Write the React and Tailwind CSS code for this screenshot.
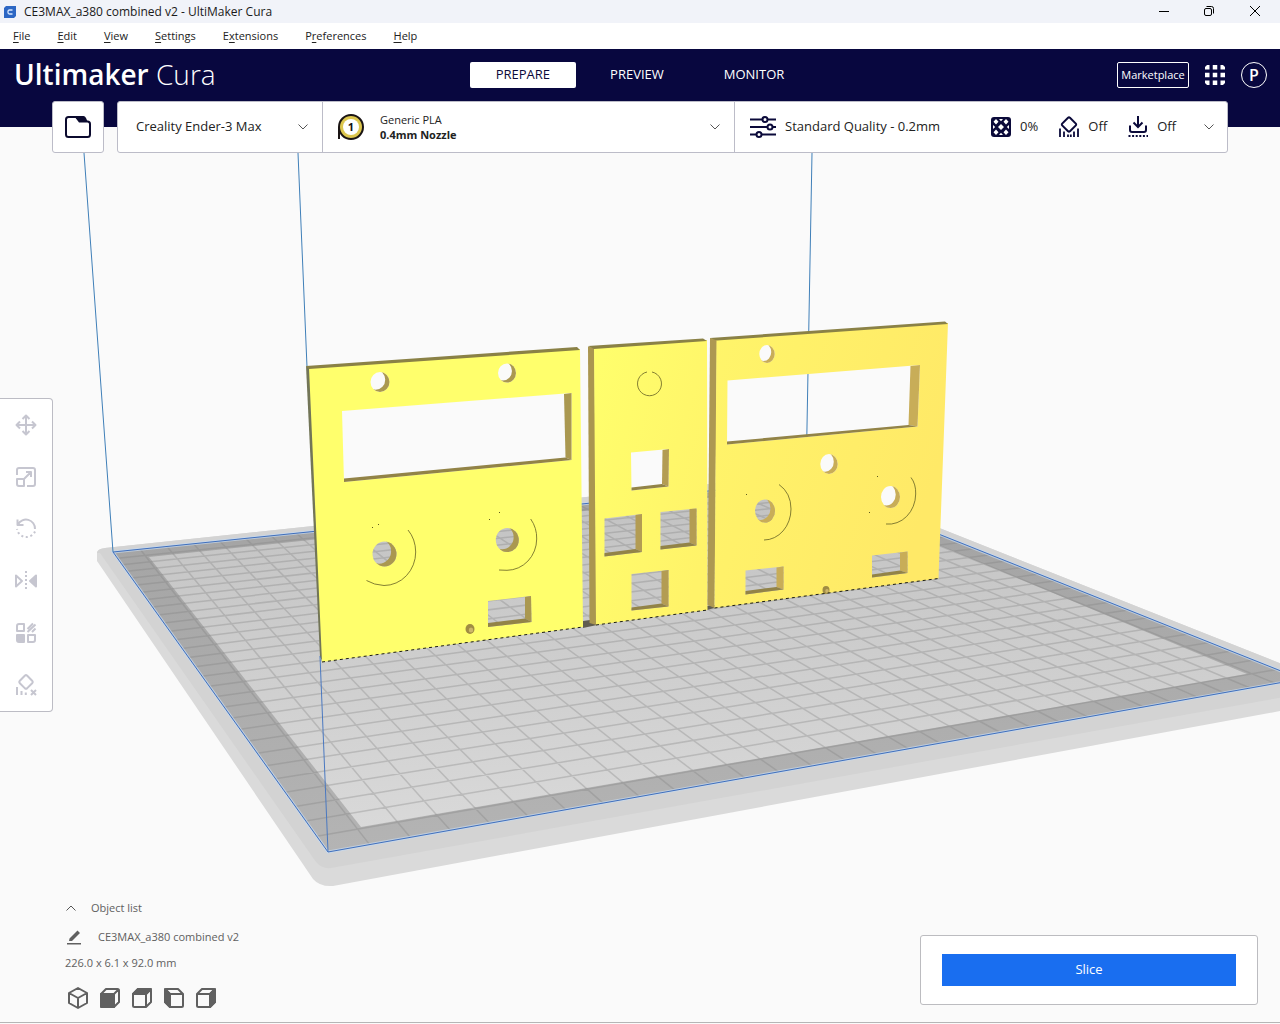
import React from "react";

/* ---------- build plate geometry ---------- */

const BED = [
  [113, 552],
  [806, 481],
  [1301, 679],
  [328, 852],
];

// Projective map from the unit square to the plate's four corners.
function projector([p0, p1, p2, p3]) {
  const dx1 = p1[0] - p2[0];
  const dx2 = p3[0] - p2[0];
  const sx = p0[0] - p1[0] + p2[0] - p3[0];
  const dy1 = p1[1] - p2[1];
  const dy2 = p3[1] - p2[1];
  const sy = p0[1] - p1[1] + p2[1] - p3[1];
  const det = dx1 * dy2 - dx2 * dy1;
  const g = (sx * dy2 - dx2 * sy) / det;
  const h = (dx1 * sy - sx * dy1) / det;
  const a = p1[0] - p0[0] + g * p1[0];
  const b = p3[0] - p0[0] + h * p3[0];
  const d = p1[1] - p0[1] + g * p1[1];
  const e = p3[1] - p0[1] + h * p3[1];
  return (u, v) => {
    const w = g * u + h * v + 1;
    return [(a * u + b * v + p0[0]) / w, (d * u + e * v + p0[1]) / w];
  };
}

const project = projector(BED);
const CELLS = 30;
const seg = (p, q) => `M${p[0].toFixed(1)} ${p[1].toFixed(1)}L${q[0].toFixed(1)} ${q[1].toFixed(1)}`;
const gridPath = Array.from({ length: CELLS - 1 }, (_, i) => {
  const t = (i + 1) / CELLS;
  return seg(project(t, 0), project(t, 1)) + seg(project(0, t), project(1, t));
}).join("");

/* ---------- model geometry ---------- */

const poly = (pts) => "M" + pts.map((p) => p.join(" ")).join("L") + "Z";
const oval = ([cx, cy, rx, ry]) =>
  `M${cx - rx} ${cy}A${rx} ${ry} 0 1 0 ${cx + rx} ${cy}A${rx} ${ry} 0 1 0 ${cx - rx} ${cy}Z`;

// Each pocket: outer corners (tl, tr, br, bl), then the inner corners of its walls (top, bottom) and the left floor edge.
const PANELS = [
  {
    fill: "#ffff6c",
    wall: "#aa9850",
    face: [[309, 368], [580, 349], [583, 627], [322, 662]],
    top: [[306, 366], [577, 347], [580, 350], [309, 369]],
    side: [[306, 366], [310, 368], [323, 662], [320, 657]],
    sideFill: "#727557",
    pockets: [
      { o: [[342, 411], [571.5, 393], [571.5, 460], [344, 482]], i: [[564, 394], [565.5, 457.5], [344, 478.5]] },
      { o: [[488, 601], [531, 596], [531.5, 622], [488, 627]], i: [[525, 597], [525, 618.5], [488, 623]] },
    ],
    bores: [[380, 382, 9.5, 10], [507, 373, 9, 9.5], [384.5, 554, 12, 12.5], [507.3, 540, 11.5, 12]],
    pins: [[470, 629, 4.5, 5]],
    arcs: "M408 530Q415.5 539 415.7 552A31.7 33.5 0 0 1 384 585.5Q374 585 366.5 580.5M530.7 519Q537 528 536.7 539A30 31.5 0 0 1 507 570.3L499 570",
    dots: [[372, 527], [378, 524], [489, 519], [499, 512]],
  },
  {
    fill: "url(#mid)",
    wall: "#b39c53",
    face: [[594, 348], [707, 340], [707.5, 610], [596, 625]],
    top: [[588, 346], [703, 338.5], [707, 341], [594, 349]],
    side: [[588, 346.5], [594.5, 348], [596.5, 625], [589.5, 623]],
    sideFill: "#aa9650",
    pockets: [
      { o: [[631, 452.5], [669, 449], [668.5, 486.5], [631.5, 490.5]], i: [[662.5, 450], [662, 484], [631.5, 487.5]] },
      { o: [[604.5, 518.5], [642, 514], [642, 552], [604.5, 556.5]], i: [[635.5, 515], [635.5, 549], [604.5, 553]] },
      { o: [[660.5, 512], [696.5, 508.5], [696.5, 545.5], [660.5, 549.5]], i: [[689.5, 509], [689.5, 542.5], [660.5, 546]] },
      { o: [[631.5, 574], [668.5, 570], [668.5, 606.5], [631.5, 610.5]], i: [[661.5, 571], [661.5, 603.5], [631.5, 607.5]] },
    ],
    bores: [],
    pins: [],
    arcs: "M652 372A12 12 0 1 1 647 372",
    dots: [],
  },
  {
    fill: "url(#right)",
    wall: "#c8ad58",
    face: [[716.5, 339], [948, 323], [938.5, 578.5], [714.5, 608]],
    top: [[710, 338], [945, 321.5], [948, 324], [717, 340.5]],
    side: [[710, 338], [717, 339], [714.5, 608], [707.5, 605]],
    sideFill: "#ad9852",
    pockets: [
      { o: [[727.5, 380.5], [920, 365], [917.5, 426.5], [727, 444.5]], i: [[910.5, 366], [908.5, 425], [727, 441.5]] },
      { o: [[745.5, 570.5], [783.5, 566.5], [783.5, 589.5], [745.5, 594.5]], i: [[776.5, 567.5], [776.5, 587], [745.5, 591]] },
      { o: [[872, 555.5], [907.5, 551.5], [907.5, 573], [872, 577.5]], i: [[900, 552.5], [900, 570.5], [872, 574.5]] },
    ],
    bores: [[767, 354, 7.7, 9], [829, 464, 8.7, 10], [765, 511, 10, 11.5], [890.5, 497, 9.5, 11]],
    pins: [[826, 590, 3.5, 4]],
    arcs: "M779 484.5Q791 493 791 509A27 31 0 0 1 764 540M911 477.5Q916 484 915.7 494A27 30.5 0 0 1 886 524",
    dots: [[877, 476], [869, 512], [746, 494]],
  },
];

function Panel({ panel, index }) {
  const holes = panel.pockets.map((p) => poly(p.o)).join("") + panel.bores.map(oval).join("");
  const [, , br, bl] = panel.face;
  return (
    <g>
      <path d={poly(panel.side)} fill={panel.sideFill} />
      <path d={poly(panel.face) + holes} fill={panel.fill} fillRule="evenodd" />
      <path d={poly(panel.top)} fill="#8a8146" />
      {panel.pockets.map(({ o, i }, k) => (
        <g key={k}>
          <path d={poly([i[0], o[1], o[2], i[1]])} fill={panel.wall} />
          <path d={poly([i[2], i[1], o[2], o[3]])} fill="#928347" />
        </g>
      ))}
      {panel.bores.map(([cx, cy, rx, ry], k) => (
        <g key={k}>
          <clipPath id={`bore-${index}-${k}`}>
            <ellipse cx={cx} cy={cy} rx={rx} ry={ry} />
          </clipPath>
          <path
            clipPath={`url(#bore-${index}-${k})`}
            d={`M${cx - 20} ${cy - 20}h40v40h-40Z` + oval([cx - rx * 0.45, cy - ry * 0.22, rx, ry])}
            fillRule="evenodd"
            fill={panel.wall}
          />
        </g>
      ))}
      {panel.pins.map(([cx, cy, rx, ry], k) => (
        <g key={k}>
          <ellipse cx={cx} cy={cy} rx={rx} ry={ry} fill="#a08c43" />
          <ellipse cx={cx + 1} cy={cy + 1} rx={rx / 2} ry={ry / 2} fill="#cdb66a" />
        </g>
      ))}
      <path d={panel.arcs} fill="none" stroke="#6f6a28" strokeWidth="1" strokeOpacity="0.85" />
      {panel.dots.map(([x, y]) => (
        <rect key={`${x}-${y}`} x={x} y={y} width="1" height="1" fill="#5f5b20" />
      ))}
      <path d={seg(bl, br)} stroke="#1b1b12" strokeDasharray="3 3" fill="none" />
    </g>
  );
}

function Scene() {
  return (
    <svg
      className="absolute inset-0 h-full w-full"
      viewBox="0 127 1280 895"
      preserveAspectRatio="xMidYMid slice"
      aria-hidden="true"
    >
      <defs>
        <linearGradient id="mid" x1="0" y1="0" x2="1" y2="0.7">
          <stop offset="0" stopColor="#ffff6c" />
          <stop offset="1" stopColor="#fff369" />
        </linearGradient>
        <linearGradient id="right" x1="0" y1="0" x2="1" y2="0.4">
          <stop offset="0" stopColor="#fff56a" />
          <stop offset="1" stopColor="#ffe967" />
        </linearGradient>
        <linearGradient id="plate" x1="0" y1="0" x2="0" y2="1">
          <stop offset="0" stopColor="#c2c2c2" />
          <stop offset="1" stopColor="#d9d9d9" />
        </linearGradient>
        <linearGradient id="border" x1="0" y1="0" x2="0" y2="1">
          <stop offset="0" stopColor="#a2a2a2" />
          <stop offset="1" stopColor="#b4b4b4" />
        </linearGradient>
      </defs>
      <path d="M97 553Q97 549 105 548L795 475Q803 474 811 477L1340 687V700L333 886Q320 887 313 879L97 561Z" fill="#dadada" />
      <path d="M97 553Q97 549 105 548L795 475Q803 474 811 477L1340 687L331 868Q322 869 316 862L100 553Z" fill="#d3d3d3" />
      <path d={poly(BED)} fill="url(#border)" />
      <path d="M149 557L802 488L1247 674L361 827Z" fill="url(#plate)" />
      <path d={gridPath} stroke="#808080" strokeOpacity="0.32" strokeWidth="1.5" fill="none" />
      <path d={poly(BED)} fill="none" stroke="#c6d9ee" strokeWidth="3" strokeOpacity="0.7" />
      <path d={poly(BED)} fill="none" stroke="#3f6fbd" />
      <path d="M84 153L113 552M298 153L307 367M812 153L806 481" fill="none" stroke="#3f7fb8" />
      <path d="M583 621L590 620L597 625L583 628ZM706 606L715 605L714 608L707 610Z" fill="#605d50" />
      {PANELS.map((p, i) => (
        <Panel key={i} panel={p} index={i} />
      ))}
      <path d="M320 656L328 852" fill="none" stroke="#4a78c0" />
    </svg>
  );
}

/* ---------- icons ---------- */

function Icon({ size = "h-6 w-6", children, ...rest }) {
  return (
    <svg
      viewBox="0 0 24 24"
      className={`${size} shrink-0`}
      fill="none"
      stroke="currentColor"
      strokeWidth="2"
      strokeLinejoin="round"
      aria-hidden="true"
      {...rest}
    >
      {children}
    </svg>
  );
}

const Chevron = ({ up }) => (
  <svg viewBox="0 0 10 6" className="h-[6px] w-[10px] shrink-0" fill="none" stroke="#555" aria-hidden="true">
    <path d={up ? "M0.5 5.5L5 1L9.5 5.5" : "M0.5 0.5L5 5L9.5 0.5"} />
  </svg>
);

const FolderIcon = () => (
  <svg viewBox="0 0 26 22" className="h-[22px] w-[26px]" fill="none" stroke="#0b0a2e" strokeWidth="2" aria-hidden="true">
    <path d="M1 18.5V3.5Q1 1 3.5 1H11L14.5 5.5H22.5Q25 5.5 25 8V18.5Q25 21 22.5 21H3.5Q1 21 1 18.5Z" />
    <path d="M9 0H18.5Q20 0 21 2L22.5 5.5H14.5Z" fill="#0b0a2e" stroke="none" />
  </svg>
);

const SpoolIcon = () => (
  <svg viewBox="0 0 28 28" className="h-7 w-7 shrink-0" aria-hidden="true">
    <path d="M2 26V14" stroke="#1a1414" strokeWidth="2" />
    <circle cx="14" cy="14" r="12" fill="#dcc64e" stroke="#1a1414" strokeWidth="2" />
    <circle cx="14" cy="14" r="8" fill="#fff" />
    <text x="14" y="18" textAnchor="middle" fontSize="11" fontWeight="700" fill="#111" className="font-['Noto_Sans',sans-serif]">
      1
    </text>
  </svg>
);

const SlidersIcon = () => (
  <svg viewBox="0 0 28 22" className="h-[22px] w-7 shrink-0" fill="none" stroke="#0b0a3a" strokeWidth="2" aria-hidden="true">
    <path d="M1 3.500H13M19 3.500H27M1 11H18M24 11H27M1 18.500H7M13 18.500H27" />
    <circle cx="16" cy="3.500" r="2.500" />
    <circle cx="21" cy="11" r="2.500" />
    <circle cx="10" cy="18.500" r="2.500" />
  </svg>
);

const InfillIcon = () => (
  <svg viewBox="0 0 20 20" className="h-5 w-5 shrink-0" aria-hidden="true">
    <rect width="20" height="20" rx="3" fill="#0b0a3a" />
    <path
      fill="#fff"
      d="M10 7L13 10L10 13L7 10ZM5 2L7.5 4.7L5 7.5L2.5 4.7ZM15 2L17.5 4.7L15 7.5L12.5 4.7ZM5 12.5L7.5 15.3L5 18L2.5 15.3ZM15 12.5L17.5 15.3L15 18L12.5 15.3ZM8 2H12L10 4.2ZM8 18H12L10 15.8ZM2 8V12L4.2 10ZM18 8V12L15.8 10Z"
    />
  </svg>
);

const SupportIcon = () => (
  <svg viewBox="0 0 20 22" className="h-[22px] w-5 shrink-0" fill="none" stroke="#0b0a3a" strokeWidth="2" aria-hidden="true">
    <path d="M9 1.8Q10 1 11 1.8L16.8 7.6Q17.5 8.5 16.8 9.4L11 15.2Q10 16 9 15.2L3.2 9.4Q2.5 8.5 3.2 7.6Z" />
    <path d="M1 21V12.5M5 21V15.5M9 21V18.5M11.8 21V18.5M15 21V15.5M19 21V12.5" strokeWidth="1.8" />
  </svg>
);

const AdhesionIcon = () => (
  <svg viewBox="0 0 20 22" className="h-[22px] w-5 shrink-0" fill="none" stroke="#0b0a3a" strokeWidth="2" aria-hidden="true">
    <path d="M10 0V10.5M5.5 6.5L10 11L14.5 6.5M2 9.5V14Q2 16 4 16H16Q18 16 18 14V9.5" />
    <path d="M0.5 20H20" strokeDasharray="2 1.6" />
  </svg>
);

const SIDE_TOOLS = [
  [
    "Move",
    <>
      <path d="M12 3V21M3 12H21" />
      <path d="M8.500 6L12 2.500L15.500 6M8.500 18L12 21.500L15.500 18M6 8.500L2.500 12L6 15.500M18 8.500L21.500 12L18 15.500" />
    </>,
  ],
  [
    "Scale",
    <>
      <path d="M3 10V5Q3 3 5 3H19Q21 3 21 5V19Q21 21 19 21H13" />
      <path d="M3 14H10V21H5Q3 21 3 19ZM10 14L17 7M12 7H17V12" />
    </>,
  ],
  [
    "Rotate",
    <>
      <path d="M3.500 2.500V8H9.500M4 7.500A9 9 0 0 1 21 12" />
      <path d="M21 14.5A9.5 9.5 0 0 1 3 12" strokeDasharray="2 2.6" />
    </>,
  ],
  [
    "Mirror",
    <>
      <path d="M2 6.5V17.5L8 12Z" />
      <path d="M22 6.5V17.5L16 12Z" fill="currentColor" />
      <path d="M12 2V22" strokeDasharray="2 2" />
    </>,
  ],
  [
    "Per model settings",
    <>
      <path d="M3 10V5Q3 3 5 3H10V10ZM14 14H21V19Q21 21 19 21H14Z" />
      <path d="M3 14H10V21H5Q3 21 3 19Z" fill="currentColor" />
      <path d="M13.500 8L19 2.500M13.500 11L21.500 3.500M18 11L21.500 7.500" />
    </>,
  ],
  [
    "Support blocker",
    <>
      <path d="M11 2.5Q12 1.7 13 2.5L18.4 8Q19.2 9 18.4 10L13 15.4Q12 16.2 11 15.4L5.6 10Q4.8 9 5.6 8Z" />
      <path d="M3 22V14M7.5 22V18M11.8 22V19.5" />
      <path d="M17 17L22 22M22 17L17 22" />
    </>,
  ],
];

const CUBE = "M3 8L8 3H19.5Q21 3 21 4.5V16L16 21H4.5Q3 21 3 19.5ZM3 8H16V21M16 8L21 3";
const VIEWS = [
  ["3D view", <path key="a" d="M12 2L21 7V17L12 22L3 17V7ZM3 7L12 12L21 7M12 12V22" />],
  ["Front view", <React.Fragment key="b"><path d={CUBE} /><path d="M3 8H16V21H3Z" fill="currentColor" /></React.Fragment>],
  ["Top view", <React.Fragment key="c"><path d={CUBE} /><path d="M3 8L8 3H21L16 8Z" fill="currentColor" /></React.Fragment>],
  ["Left view", <React.Fragment key="d"><path d="M21 8L16 3H4.500Q3 3 3 4.500V16L8 21H19.500Q21 21 21 19.500ZM21 8H8V21M8 8L3 3" /><path d="M3 3L8 8V21L3 16Z" fill="currentColor" /></React.Fragment>],
  ["Right view", <React.Fragment key="e"><path d={CUBE} /><path d="M21 3L16 8V21L21 16Z" fill="currentColor" /></React.Fragment>],
];

/* ---------- page ---------- */

const MENU = [
  ["", "F", "ile"],
  ["", "E", "dit"],
  ["", "V", "iew"],
  ["", "S", "ettings"],
  ["E", "x", "tensions"],
  ["P", "r", "eferences"],
  ["", "H", "elp"],
];

function TitleBar() {
  return (
    <div className="flex h-[23px] items-center bg-[#f1f3f9] pl-[4px] text-[12px] text-[#1a1a1a]">
      <svg viewBox="0 0 12 12" className="h-3 w-3" aria-hidden="true">
        <path d="M2 0H12V10L10 12H0V2Z" fill="#2d67c4" />
        <path d="M8.500 4H5.500Q4 4 4 5.500V6.500Q4 8 5.500 8H8.500" fill="none" stroke="#d8e8ff" strokeWidth="1.300" />
      </svg>
      <span className="ml-2 flex-1">CE3MAX_a380 combined v2 - UltiMaker Cura</span>
      <div className="flex h-full items-center pr-[1px] pb-[2px] text-black">
        <button aria-label="Minimize" className="flex w-[45px] justify-center">
          <svg viewBox="0 0 10 10" className="h-[10px] w-[10px]" stroke="currentColor"><path d="M0 5.500H10" /></svg>
        </button>
        <button aria-label="Restore" className="flex w-[45px] justify-center">
          <svg viewBox="0 0 10 10" className="h-[10px] w-[10px]" fill="none" stroke="currentColor">
            <rect x="0.500" y="2.500" width="7" height="7" rx="1.500" />
            <path d="M2.500 0.500H7.500Q9.500 0.500 9.500 2.500V7.500" />
          </svg>
        </button>
        <button aria-label="Close" className="flex w-[48px] justify-center">
          <svg viewBox="0 0 10 10" className="h-[10px] w-[10px]" stroke="currentColor"><path d="M0 0L10 10M10 0L0 10" /></svg>
        </button>
      </div>
    </div>
  );
}

function Header() {
  return (
    <header className="grid h-[78px] grid-cols-[1fr_auto_1fr] items-start bg-[#08073f] text-white">
      <h1 className="pt-[6px] pl-[14px] text-[28px] leading-[38px] font-light">
        <span className="font-semibold">Ultimaker</span> Cura
      </h1>
      <nav className="mt-[13px] flex gap-2 text-[13px]">
        <button className="h-[26px] rounded-[2px] bg-white px-[26px] text-[#0b0a3a]">PREPARE</button>
        <button className="h-[26px] px-[26px]">PREVIEW</button>
        <button className="h-[26px] px-[26px]">MONITOR</button>
      </nav>
      <div className="mt-[13px] flex items-center justify-end gap-4 pr-[13px]">
        <button className="h-[26px] w-[72px] rounded-[2px] border border-white text-[11px]">Marketplace</button>
        <button aria-label="Applications">
          <svg viewBox="0 0 20 20" className="h-5 w-5" fill="#fff" aria-hidden="true">
            <path d="M2 0H4.500V4.500H0V2ZM7.750 0H12.250V4.500H7.750ZM15.500 0H18L20 2V4.500H15.500ZM0 7.750H4.500V12.250H0ZM7.750 7.750H12.250V12.250H7.750ZM15.500 7.750H20V12.250H15.500ZM0 15.500H4.500V20H2L0 18ZM7.750 15.500H12.250V20H7.750ZM15.500 15.500H20V18L18 20H15.500Z" />
          </svg>
        </button>
        <button aria-label="Account" className="flex h-[26px] w-[26px] items-center justify-center rounded-full border border-white text-[16px] font-semibold">
          P
        </button>
      </div>
    </header>
  );
}

function StageBar() {
  return (
    <div className="relative mx-[52px] -mt-[26px] flex h-[52px] gap-[13px] text-[13px] text-[#222]">
      <button aria-label="Open file" className="flex w-[52px] items-center justify-center rounded-[3px] border border-[#bcbcc8] bg-white">
        <FolderIcon />
      </button>
      <div className="grid flex-1 grid-cols-[204fr_412fr_493fr] rounded-[3px] border border-[#bcbcc8] bg-white">
        <button className="flex items-center justify-between pr-[14px] pl-[18px]">
          Creality Ender-3 Max
          <Chevron />
        </button>
        <button className="flex items-center border-l border-[#bcbcc8] pr-[14px] pl-[14px] text-left">
          <SpoolIcon />
          <span className="ml-[15px] flex-1 text-[11px] leading-[15px]">
            <span className="block">Generic PLA</span>
            <span className="block font-bold">0.4mm Nozzle</span>
          </span>
          <Chevron />
        </button>
        <button className="flex items-center border-l border-[#bcbcc8] pr-[13px] pl-[14px] text-left">
          <SlidersIcon />
          <span className="ml-2 flex-1">Standard Quality - 0.2mm</span>
          <InfillIcon />
          <span className="mr-[21px] ml-[9px]">0%</span>
          <SupportIcon />
          <span className="mr-[21px] ml-[9px]">Off</span>
          <AdhesionIcon />
          <span className="mr-7 ml-[9px]">Off</span>
          <Chevron />
        </button>
      </div>
    </div>
  );
}

export default function App() {
  return (
    <div className="flex min-h-screen flex-col bg-[#fafafa] font-['Open_Sans','Noto_Sans',sans-serif]">
      <TitleBar />
      <nav className="flex h-[26px] items-center gap-[27px] bg-white pl-[13px] text-[11px] text-[#222]">
        {MENU.map(([a, b, c]) => (
          <button key={a + b + c}>
            {a}
            <span className="underline underline-offset-2">{b}</span>
            {c}
          </button>
        ))}
      </nav>
      <Header />
      <main className="relative flex flex-1 flex-col border-b border-[#b5b5b5]">
        <Scene />
        <StageBar />
        <div className="relative mt-[245px] flex w-[53px] flex-col rounded-r-[4px] border border-l-0 border-[#bcbcc4] bg-white text-[#c6c6d0]">
          {SIDE_TOOLS.map(([label, drawing]) => (
            <button key={label} aria-label={label} className="flex h-[52px] items-center justify-center">
              <Icon>{drawing}</Icon>
            </button>
          ))}
        </div>
        <div className="relative mt-auto flex items-end justify-between pr-[22px] pb-[17px] pl-[65px]">
          <div className="-mb-[5px] text-[11px] text-[#606060]">
            <button className="flex h-7 items-center gap-[15px] pl-[1px]">
              <Chevron up />
              Object list
            </button>
            <button className="flex h-[30px] items-center gap-4 pl-[1px]">
              <svg viewBox="0 0 16 16" className="h-4 w-4" fill="currentColor" aria-hidden="true">
                <path d="M1 14H15V15.500H1ZM3 12L3.500 9.500L11.500 1.500L14 4L6 12Z" />
              </svg>
              CE3MAX_a380 combined v2
            </button>
            <p className="leading-[22px]">226.0 x 6.1 x 92.0 mm</p>
            <div className="mt-3 flex gap-2 pl-[1px]">
              {VIEWS.map(([label, drawing]) => (
                <button key={label} aria-label={label}>
                  <Icon>{drawing}</Icon>
                </button>
              ))}
            </div>
          </div>
          <div className="w-[338px] rounded-[3px] border border-[#bcbcc0] bg-white px-[21px] py-[18px]">
            <button className="h-8 w-full bg-[#196ef0] text-[13px] text-white">Slice</button>
          </div>
        </div>
      </main>
      <div className="h-[1px]" />
    </div>
  );
}
